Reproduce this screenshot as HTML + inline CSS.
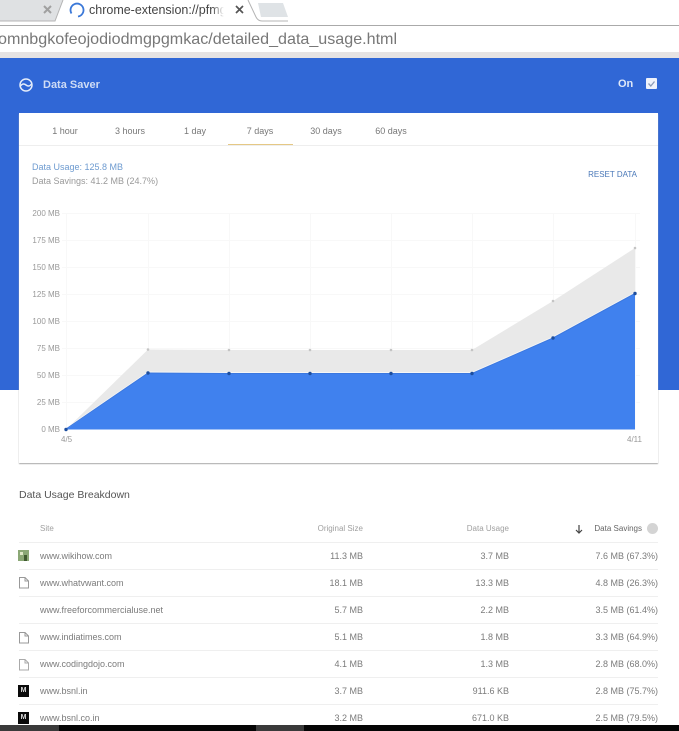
<!DOCTYPE html>
<html><head><meta charset="utf-8"><style>
html,body{margin:0;padding:0;background:#fff}
html{width:679px;height:731px;overflow:hidden}
#w{width:679px;height:731px;overflow:hidden;position:relative;background:#fff;font-family:"Liberation Sans",sans-serif;color:#777;filter:blur(.35px)}
.a{position:absolute;white-space:nowrap}
.r{position:absolute;white-space:nowrap;text-align:right}
.tab{position:absolute;top:126px;font-size:9px;color:#777;line-height:11px;transform:translateX(-50%)}
.y{position:absolute;right:619px;font-size:8px;color:#999;line-height:10px;white-space:nowrap}
.line{position:absolute;left:19px;width:639px;height:1px;background:#efefef}
.t{position:absolute;font-size:9px;color:#7b7b7b;line-height:12px;white-space:nowrap}
.h{position:absolute;font-size:8px;color:#a0a0a0;line-height:10px;white-space:nowrap;top:524px}
</style></head><body><div id="w">
<!-- browser chrome -->
<div class="a" style="left:0;top:0;width:679px;height:26px;background:#fff"></div>
<svg class="a" style="left:0;top:0" width="300" height="28">
<path d="M0 0H63L55 21H0Z" fill="#dfe1e3"/>
<path d="M63 0L55 21H0" fill="none" stroke="#b4b4b4"/>
<path d="M258 3H283L288 17H261Z" fill="#dfe3e6"/>
<path d="M248 0L256 17Q258 21 262 21H288" fill="none" stroke="#b4b4b4"/>
<path d="M44 6L51 13M51 6L44 13" stroke="#a0a0a0" stroke-width="2"/>
<path d="M236 6L243 13M243 6L236 13" stroke="#555" stroke-width="1.7"/>
<path d="M71.500 13.500A6.500 6.500 0 1 1 78 16.500" fill="none" stroke="#3b78d8" stroke-width="1.800"/>
</svg>
<div class="a" style="left:89px;top:3px;font-size:12.500px;line-height:15px;color:#444;width:135px;overflow:hidden">chrome-extension://pfmg</div>
<div class="a" style="left:212px;top:3px;width:12px;height:15px;background:linear-gradient(90deg,rgba(255,255,255,0),#fff)"></div>
<div class="a" style="left:0;top:25px;width:679px;height:1px;background:#aaa"></div>
<div class="a" style="left:-2px;top:29px;font-size:16.100px;line-height:21px;color:#777">omnbgkofeojodiodmgpgmkac/detailed_data_usage.html</div>
<div class="a" style="left:0;top:52px;width:679px;height:6px;background:#e6e3e3"></div>
<!-- blue header -->
<div class="a" style="left:0;top:58px;width:679px;height:332px;background:#3067d6"></div>
<svg class="a" style="left:18px;top:77px" width="16" height="16" fill="none" stroke="#e4ecfa" stroke-width="1.500">
<circle cx="8" cy="8" r="6"/><path d="M2.500 9Q5 5.500 8 8T13.500 7"/></svg>
<div class="a" style="left:43px;top:79px;font-size:11px;font-weight:bold;line-height:13px;color:#cfdcf5">Data Saver</div>
<div class="a" style="left:618px;top:78px;font-size:11px;font-weight:bold;line-height:13px;color:#dfe8f8">On</div>
<svg class="a" style="left:646px;top:78px" width="12" height="12"><rect width="11" height="11" rx="1" fill="#eef2fb"/><path d="M2.500 5.500L4.800 8L8.500 3.500" fill="none" stroke="#8a9ab8" stroke-width="1.300"/></svg>
<!-- card -->
<div class="a" style="left:19px;top:113px;width:639px;height:350px;background:#fff;box-shadow:0 1px 1px #aaa"></div>
<div class="tab" style="left:65px">1 hour</div>
<div class="tab" style="left:130px">3 hours</div>
<div class="tab" style="left:195px">1 day</div>
<div class="tab" style="left:260px">7 days</div>
<div class="tab" style="left:326px">30 days</div>
<div class="tab" style="left:391px">60 days</div>
<div class="a" style="left:19px;top:145px;width:639px;height:1px;background:#eee"></div>
<div class="a" style="left:228px;top:144px;width:65px;height:1px;background:#e5c885"></div>
<div class="a" style="left:32px;top:162px;font-size:9px;line-height:11px;color:#6e9bd0">Data Usage: 125.8 MB</div>
<div class="a" style="left:32px;top:176px;font-size:9px;line-height:11px;color:#999">Data Savings: 41.2 MB (24.7%)</div>
<div class="r" style="right:42px;top:169px;font-size:8px;line-height:11px;color:#4a78b8">RESET DATA</div>
<div class="y" style="top:209px">200 MB</div>
<div class="y" style="top:236px">175 MB</div>
<div class="y" style="top:263px">150 MB</div>
<div class="y" style="top:290px">125 MB</div>
<div class="y" style="top:317px">100 MB</div>
<div class="y" style="top:344px">75 MB</div>
<div class="y" style="top:371px">50 MB</div>
<div class="y" style="top:398px">25 MB</div>
<div class="y" style="top:425px">0 MB</div>
<svg class="a" style="left:0;top:0" width="679" height="470">
<g stroke="#f8f8f8" fill="none">
<path d="M62 213.500H640M62 240.500H640M62 267.500H640M62 294.500H640M62 321.500H640M62 348.500H640M62 375.500H640M62 402.500H640"/>
<path d="M66.500 213V430M148.500 213V430M229.500 213V430M310.500 213V430M391.500 213V430M472.500 213V430M553.500 213V430M635.500 213V430"/>
</g>
<path d="M66 429.500L148 349.500L229 350L310 350L391 350L472 350L553 301L635 248V429.500Z" fill="#e9e9e9"/>
<path d="M64 429L148 371.500L229 372L310 372L391 372L472 372L553 336.500L635 292L637 430H64Z" fill="#fff" opacity=".6"/>
<path d="M66 429.500L148 373L229 373.500L310 373.500L391 373.500L472 373.500L553 338L635 293.500V429.500Z" fill="#4081ee"/>
<path d="M66 429L148 373L229 373.500L310 373.500L391 373.500L472 373.500L553 338L635 293.500" fill="none" stroke="#3b78e0" stroke-width="1"/>
<g fill="#c4c4c4"><circle cx="148" cy="349.500" r="1.300"/><circle cx="229" cy="350" r="1.300"/><circle cx="310" cy="350" r="1.300"/><circle cx="391" cy="350" r="1.300"/><circle cx="472" cy="350" r="1.300"/><circle cx="553" cy="301" r="1.300"/><circle cx="635" cy="248" r="1.300"/></g>
<g fill="#1d4e9e"><circle cx="66" cy="429.500" r="1.700"/><circle cx="148" cy="373" r="1.700"/><circle cx="229" cy="373.500" r="1.700"/><circle cx="310" cy="373.500" r="1.700"/><circle cx="391" cy="373.500" r="1.700"/><circle cx="472" cy="373.500" r="1.700"/><circle cx="553" cy="338" r="1.700"/><circle cx="635" cy="293.500" r="1.700"/></g>
</svg>
<div class="a" style="left:61px;top:435px;font-size:8px;line-height:10px;color:#999">4/5</div>
<div class="a" style="left:627px;top:435px;font-size:8px;line-height:10px;color:#999">4/11</div>
<!-- breakdown -->
<div class="a" style="left:19px;top:489px;font-size:10.500px;line-height:13px;color:#555">Data Usage Breakdown</div>
<div class="h" style="left:40px">Site</div>
<div class="h" style="right:316px">Original Size</div>
<div class="h" style="right:170px">Data Usage</div>
<div class="h" style="right:37px;color:#666">Data Savings</div>
<svg class="a" style="left:574px;top:524px" width="10" height="10" fill="none" stroke="#444" stroke-width="1.200"><path d="M5 1V8.500M2 6L5 9L8 6"/></svg>
<div class="a" style="left:647px;top:523px;width:11px;height:11px;border-radius:50%;background:#d4d4d4"></div>
<div class="line" style="top:542px"></div><div class="line" style="top:569px"></div><div class="line" style="top:596px"></div><div class="line" style="top:623px"></div><div class="line" style="top:650px"></div><div class="line" style="top:677px"></div><div class="line" style="top:704px"></div>
<!-- icons -->
<svg class="a" style="left:18px;top:550px" width="12" height="12"><rect width="11" height="11" fill="#8ba876"/><rect x="2" y="2" width="3" height="3" fill="#dfe8c8"/><rect x="6" y="5" width="3" height="6" fill="#3f5a30"/></svg>
<svg class="a" style="left:18px;top:576px" width="12" height="13" fill="none" stroke="#999"><path d="M1.500 1.500H7L10.500 5V12H1.500ZM7 1.500V5H10.500"/></svg>
<svg class="a" style="left:18px;top:631px" width="12" height="13" fill="none" stroke="#999"><path d="M1.500 1.500H7L10.500 5V12H1.500ZM7 1.500V5H10.500"/></svg>
<svg class="a" style="left:18px;top:658px" width="12" height="13" fill="none" stroke="#aaa"><path d="M1.500 1.500H7L10.500 5V12H1.500ZM7 1.500V5H10.500"/></svg>
<div class="a" style="left:18px;top:685px;width:11px;height:12px;background:#0a0a0a;color:#ddd;font-size:7px;font-weight:bold;line-height:12px;text-align:center">M</div>
<div class="a" style="left:18px;top:712px;width:11px;height:12px;background:#0a0a0a;color:#ddd;font-size:7px;font-weight:bold;line-height:12px;text-align:center">M</div>
<!-- rows -->
<div class="t" style="left:40px;top:550px">www.wikihow.com</div><div class="t" style="right:316px;top:550px">11.3 MB</div><div class="t" style="right:170px;top:550px">3.7 MB</div><div class="t" style="right:21px;top:550px">7.6 MB (67.3%)</div>
<div class="t" style="left:40px;top:577px">www.whatvwant.com</div><div class="t" style="right:316px;top:577px">18.1 MB</div><div class="t" style="right:170px;top:577px">13.3 MB</div><div class="t" style="right:21px;top:577px">4.8 MB (26.3%)</div>
<div class="t" style="left:40px;top:604px">www.freeforcommercialuse.net</div><div class="t" style="right:316px;top:604px">5.7 MB</div><div class="t" style="right:170px;top:604px">2.2 MB</div><div class="t" style="right:21px;top:604px">3.5 MB (61.4%)</div>
<div class="t" style="left:40px;top:631px">www.indiatimes.com</div><div class="t" style="right:316px;top:631px">5.1 MB</div><div class="t" style="right:170px;top:631px">1.8 MB</div><div class="t" style="right:21px;top:631px">3.3 MB (64.9%)</div>
<div class="t" style="left:40px;top:658px">www.codingdojo.com</div><div class="t" style="right:316px;top:658px">4.1 MB</div><div class="t" style="right:170px;top:658px">1.3 MB</div><div class="t" style="right:21px;top:658px">2.8 MB (68.0%)</div>
<div class="t" style="left:40px;top:685px">www.bsnl.in</div><div class="t" style="right:316px;top:685px">3.7 MB</div><div class="t" style="right:170px;top:685px">911.6 KB</div><div class="t" style="right:21px;top:685px">2.8 MB (75.7%)</div>
<div class="t" style="left:40px;top:712px">www.bsnl.co.in</div><div class="t" style="right:316px;top:712px">3.2 MB</div><div class="t" style="right:170px;top:712px">671.0 KB</div><div class="t" style="right:21px;top:712px">2.5 MB (79.5%)</div>
<!-- bottom bar -->
<div class="a" style="left:0;top:725px;width:679px;height:6px;background:#050505"></div>
<div class="a" style="left:0;top:725px;width:59px;height:6px;background:#3a3a3a"></div>
<div class="a" style="left:256px;top:725px;width:48px;height:6px;background:#3a3a3a"></div>
</div></body></html>
